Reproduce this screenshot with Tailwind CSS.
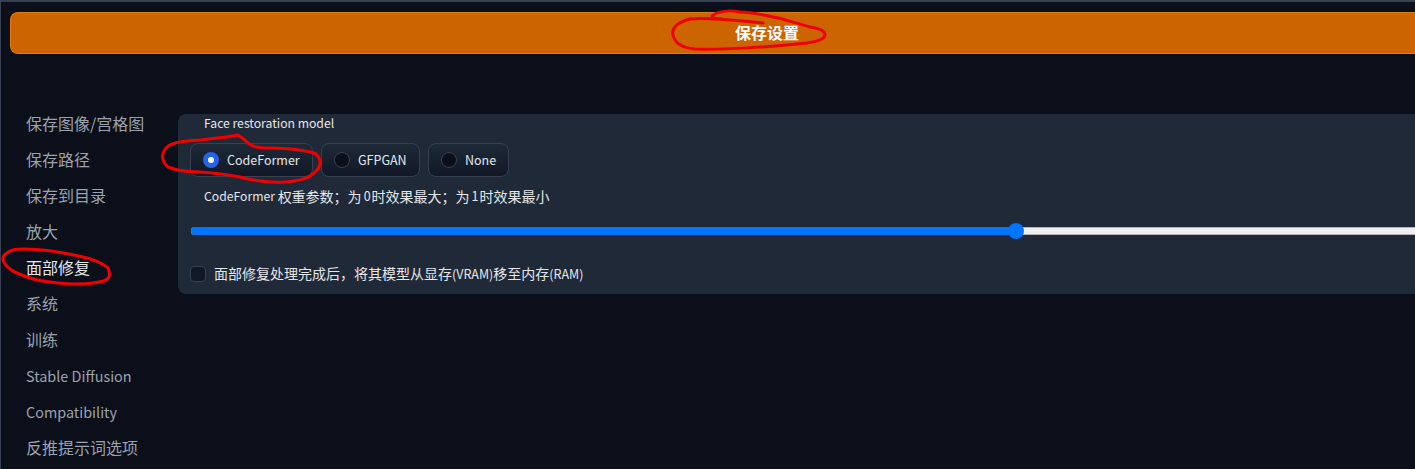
<!DOCTYPE html>
<html lang="zh">
<head>
<meta charset="utf-8">
<script src="https://cdn.jsdelivr.net/npm/@tailwindcss/browser@4"></script>
</head>
<body class="m-0 bg-[#0b0f19]">
<div class="relative w-[1415px] h-[469px] overflow-hidden bg-[#0b0f19] border-t-2 border-l border-[#374151] font-['Noto_Sans_CJK_SC','Noto_Sans',sans-serif]">
  <div class="ml-[9px] mt-[10px] h-[42px] rounded-l-lg bg-[#cc6400] border border-[#e07b10] border-r-0 flex items-center justify-center text-white font-bold text-base pl-[108px] pb-0.5">保存设置</div>
  <div class="flex mt-[52px]">
    <nav class="w-[168px] shrink-0 pl-[25px] text-[#9ca3af] text-base flex flex-col">
      <div class="h-9 flex items-center pb-0.5">保存图像/宫格图</div>
      <div class="h-9 flex items-center pb-0.5">保存路径</div>
      <div class="h-9 flex items-center pb-0.5">保存到目录</div>
      <div class="h-9 flex items-center pb-0.5">放大</div>
      <div class="h-9 flex items-center pb-0.5 text-[#e5e7eb]">面部修复</div>
      <div class="h-9 flex items-center pb-0.5">系统</div>
      <div class="h-9 flex items-center pb-0.5">训练</div>
      <div class="h-9 flex items-center text-[14.4px]">Stable Diffusion</div>
      <div class="h-9 flex items-center text-[14.4px]">Compatibility</div>
      <div class="h-9 flex items-center pb-0.5">反推提示词选项</div>
    </nav>
    <section class="ml-[9px] mt-2 w-full h-[180px] rounded-l-lg bg-[#1f2937] pl-3 text-[#e5e7eb] text-[12.5px] flex flex-col self-start">
      <div class="h-5 ml-[14px] flex items-center text-[12.2px] pb-0.5">Face restoration model</div>
      <div class="flex gap-2 mt-[9px]">
        <label class="h-[34px] w-[123px] rounded-lg border border-[#374151] bg-gradient-to-b from-[#1f2937] to-[#111827] flex items-center pl-[12px] gap-2">
          <span class="w-4 h-4 rounded-full bg-[#2563eb] flex items-center justify-center"><span class="w-[6px] h-[6px] rounded-full bg-white"></span></span>
          <span>CodeFormer</span>
        </label>
        <label class="h-[34px] w-[99px] rounded-lg border border-[#374151] bg-gradient-to-b from-[#1f2937] to-[#111827] flex items-center pl-[12px] gap-2">
          <span class="w-4 h-4 rounded-full border border-[#374151] bg-[#0b0f19]"></span>
          <span>GFPGAN</span>
        </label>
        <label class="h-[34px] w-[81px] rounded-lg border border-[#374151] bg-gradient-to-b from-[#1f2937] to-[#111827] flex items-center pl-[12px] gap-2">
          <span class="w-4 h-4 rounded-full border border-[#374151] bg-[#0b0f19]"></span>
          <span>None</span>
        </label>
      </div>
      <div class="h-5 ml-[14px] mt-[10px] flex items-center whitespace-pre pb-0.5"><span class="text-[12.2px]">CodeFormer </span><span class="text-sm">权重参数；为</span><span class="ml-0.5 mr-px">0</span><span class="text-sm">时效果最大；为</span><span class="ml-0.5 mr-px">1</span><span class="text-sm">时效果最小</span></div>
      <div class="relative h-[8px] mt-[20px] ml-px w-[1225px] rounded-l bg-[#efefef] border-y border-[#b5b5b5]">
        <div class="absolute -top-px h-[8px] left-0 w-[824px] rounded-l-full bg-[#0075ff]"></div>
        <div class="absolute top-[-5px] left-[817px] w-4 h-4 rounded-full bg-[#0075ff]"></div>
      </div>
      <div class="flex items-center mt-[28px]">
        <span class="w-4 h-4 rounded border border-[#374151] bg-[#111827]"></span>
        <span class="ml-2 pb-0.5"><span class="text-sm">面部修复处理完成后，将其模型从显存</span>(VRAM)<span class="text-sm">移至内存</span>(RAM)</span>
      </div>
    </section>
  </div>
  <svg class="absolute top-[-2px] left-[-1px]" width="1415" height="469" fill="none" stroke="#f00000" stroke-width="3" stroke-linecap="round" stroke-linejoin="round">
    <path d="M763 23 C740 21 710 17 690 19 C678 22 671 28 673 35 C675 44 683 48 695 49 C720 50 770 47 807 43 C820 41 826 38 825 34 C824 30 818 28 810 27 C795 23 785 19 773 17 C760 14 750 12 740 12 C730 10 717 11 712 16 C712 18 716 19 722 19"/>
    <path d="M238 135 C225 138 212 138 200 140 C185 141 172 142 167 147 C161 153 161 161 168 167 C178 171 190 172 200 172 C215 173 230 175 240 177 C255 181 270 183 285 182 C300 181 310 178 315 172 C320 168 321 163 319 158 C317 153 312 152 305 151 C295 149 285 148 270 148 C255 148 252 146 248 143 C245 140 241 137 238 135"/>
    <path d="M107 267 C100 262 92 259 83 257 C70 254 55 251 43 250 C30 249 20 248 13 250 C6 252 2 256 3 260 C5 266 10 270 17 273 C28 278 38 281 50 282 C65 284 80 285 93 283 C102 282 107 281 109 277 C110 272 109 269 107 267"/>
  </svg>
</div>
</body>
</html>
